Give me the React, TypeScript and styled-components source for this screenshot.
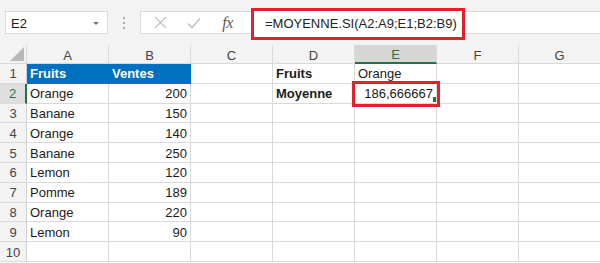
import styled, { createGlobalStyle } from 'styled-components'

const GlobalStyle = createGlobalStyle`
    html, body {
        margin: 0;
        padding: 0;
        background: #ffffff;
        overflow: hidden;
    }
    body {
        font-family: "Liberation Sans", Arial, sans-serif;
        color: #1b1b1b;
    }
`

type CellValue = string | number

const COLUMNS = ['A', 'B', 'C', 'D', 'E', 'F', 'G']

const ROWS: CellValue[][] = [
    ['Fruits', 'Ventes', '', 'Fruits', 'Orange'],
    ['Orange', 200, '', 'Moyenne', '186,666667'],
    ['Banane', 150],
    ['Orange', 140],
    ['Banane', 250],
    ['Lemon', 120],
    ['Pomme', 189],
    ['Orange', 220],
    ['Lemon', 90],
    [],
]

const ACTIVE_COL = 4
const ACTIVE_ROW = 1

const App = () => {
    return (
        <Page>
            <GlobalStyle />
            <Toolbar>
                <NameBox>
                    <span>E2</span>
                    <Caret />
                </NameBox>
                <Grip>
                    <i /><i /><i />
                </Grip>
                <FormulaBar>
                    <IconSlot>
                        <svg width="13" height="13" viewBox="0 0 13 13">
                            <path d="M1 1 L12 12 M12 1 L1 12" stroke="#c3c3c3" strokeWidth="1.4" fill="none" />
                        </svg>
                    </IconSlot>
                    <IconSlot>
                        <svg width="14" height="12" viewBox="0 0 14 12">
                            <path d="M1 6.5 L5 10.5 L13 1.5" stroke="#c3c3c3" strokeWidth="1.6" fill="none" />
                        </svg>
                    </IconSlot>
                    <FxSlot>fx</FxSlot>
                    <FormulaText>=MOYENNE.SI(A2:A9;E1;B2:B9)</FormulaText>
                </FormulaBar>
            </Toolbar>
            <Sheet>
                <Corner>
                    <CornerTriangle />
                </Corner>
                {COLUMNS.map((col, i) => (
                    <ColHeader key={col} $active={i === ACTIVE_COL}>{col}</ColHeader>
                ))}
                {ROWS.map((row, r) => (
                    <RowGroup key={r}>
                        <RowHeader $active={r === ACTIVE_ROW}>{r + 1}</RowHeader>
                        {COLUMNS.map((_, c) => {
                            const value = row[c] ?? ''
                            const isHeader = r === 0 && c < 2
                            const isLabel = c === 3 && value !== ''
                            const isActive = r === ACTIVE_ROW && c === ACTIVE_COL
                            const alignRight = typeof value === 'number' || isActive
                            return (
                                <Cell
                                    key={c}
                                    $fill={isHeader}
                                    $bold={isHeader || isLabel}
                                    $right={alignRight}
                                    $selected={isActive}
                                >
                                    {value}
                                </Cell>
                            )
                        })}
                    </RowGroup>
                ))}
            </Sheet>
        </Page>
    )
}

export default App

const Page = styled.div`
    width: 600px;
    height: 263px;
    overflow: hidden;
    background: #ffffff;
`

const Toolbar = styled.div`
    height: 45px;
    box-sizing: border-box;
    background: #f3f3f3;
    display: flex;
    align-items: flex-start;
    padding: 11px 0 0 5px;
`

const NameBox = styled.div`
    width: 103px;
    height: 23px;
    box-sizing: border-box;
    background: #ffffff;
    border: 1px solid #dadada;
    display: flex;
    align-items: center;
    justify-content: space-between;
    padding: 1px 8px 0 5px;
    font-size: 13px;
    color: #222;
`

const Caret = styled.span`
    width: 0;
    height: 0;
    border-left: 3px solid transparent;
    border-right: 3px solid transparent;
    border-top: 3px solid #777;
    margin-top: 1px;
`

const Grip = styled.div`
    width: 32px;
    height: 23px;
    display: flex;
    flex-direction: column;
    align-items: center;
    justify-content: center;
    gap: 3px;
    i {
        display: block;
        width: 2px;
        height: 2px;
        background: #a9a9a9;
    }
`

const FormulaBar = styled.div`
    flex: 1;
    height: 23px;
    box-sizing: border-box;
    background: #ffffff;
    border: 1px solid #dadada;
    border-right: none;
    display: flex;
    align-items: flex-start;
    padding-left: 3px;
`

const IconSlot = styled.div`
    width: 33px;
    height: 21px;
    display: flex;
    align-items: center;
    justify-content: center;
`

const FxSlot = styled.div`
    width: 35px;
    height: 21px;
    display: flex;
    align-items: center;
    justify-content: center;
    font-family: "Liberation Serif", "Times New Roman", serif;
    font-style: italic;
    font-size: 16px;
    color: #5a5a5a;
    letter-spacing: -0.5px;
`

const FormulaText = styled.div`
    margin-left: 9px;
    margin-top: -1px;
    height: 26px;
    box-sizing: border-box;
    display: flex;
    align-items: center;
    padding: 0 5px 2px 11px;
    font-size: 13px;
    color: #222;
    white-space: nowrap;
    outline: 3px solid #e3202b;
    background: #ffffff;
`

const Sheet = styled.div`
    display: grid;
    grid-template-columns: 27px repeat(7, 82px);
    grid-template-rows: 19px repeat(10, 19.8px);
`

const RowGroup = styled.div`
    display: contents;
`

const HeaderBase = styled.div`
    box-sizing: border-box;
    background: #f3f3f3;
    color: #444;
    font-size: 13px;
    display: flex;
    align-items: center;
    justify-content: center;
`

const Corner = styled(HeaderBase)`
    position: relative;
    border-right: 1px solid #d9d9d9;
    border-bottom: 1px solid #d9d9d9;
`

const CornerTriangle = styled.span`
    position: absolute;
    right: 2px;
    bottom: 2px;
    width: 0;
    height: 0;
    border-left: 14px solid transparent;
    border-bottom: 14px solid #b9b9b9;
`

const ColHeader = styled(HeaderBase)<{ $active: boolean }>`
    padding-top: 2px;
    background: ${p => (p.$active ? '#d6d6d6' : '#f3f3f3')};
    color: ${p => (p.$active ? '#217346' : '#444')};
    border-right: 1px solid #d9d9d9;
    border-bottom: ${p => (p.$active ? '2px solid #217346' : '1px solid #d9d9d9')};
`

const RowHeader = styled(HeaderBase)<{ $active: boolean }>`
    padding-top: 1px;
    background: ${p => (p.$active ? '#dedede' : '#f3f3f3')};
    color: ${p => (p.$active ? '#217346' : '#444')};
    border-bottom: 1px solid #dadada;
    border-right: ${p => (p.$active ? '2px solid #217346' : '1px solid #d0d0d0')};
`

const Cell = styled.div<{ $fill: boolean; $bold: boolean; $right: boolean; $selected: boolean }>`
    box-sizing: border-box;
    position: ${p => (p.$selected ? 'relative' : 'static')};
    z-index: ${p => (p.$selected ? 2 : 'auto')};
    display: flex;
    align-items: center;
    justify-content: ${p => (p.$right ? 'flex-end' : 'flex-start')};
    padding: 1px 3px 0 3px;
    font-size: 13px;
    font-weight: ${p => (p.$bold ? 700 : 400)};
    color: ${p => (p.$fill ? '#ffffff' : '#1b1b1b')};
    background: ${p => (p.$fill ? '#0070c0' : '#ffffff')};
    border-right: 1px solid ${p => (p.$fill ? '#0070c0' : '#d9d9d9')};
    border-bottom: 1px solid ${p => (p.$fill ? '#0070c0' : '#d9d9d9')};
    white-space: nowrap;
    outline: ${p => (p.$selected ? '3px solid #e3202b' : 'none')};
    outline-offset: ${p => (p.$selected ? '0px' : '0')};
    &::after {
        content: '';
        display: ${p => (p.$selected ? 'block' : 'none')};
        position: absolute;
        right: 0;
        bottom: 1px;
        width: 3px;
        height: 5px;
        background: #217346;
    }
`
